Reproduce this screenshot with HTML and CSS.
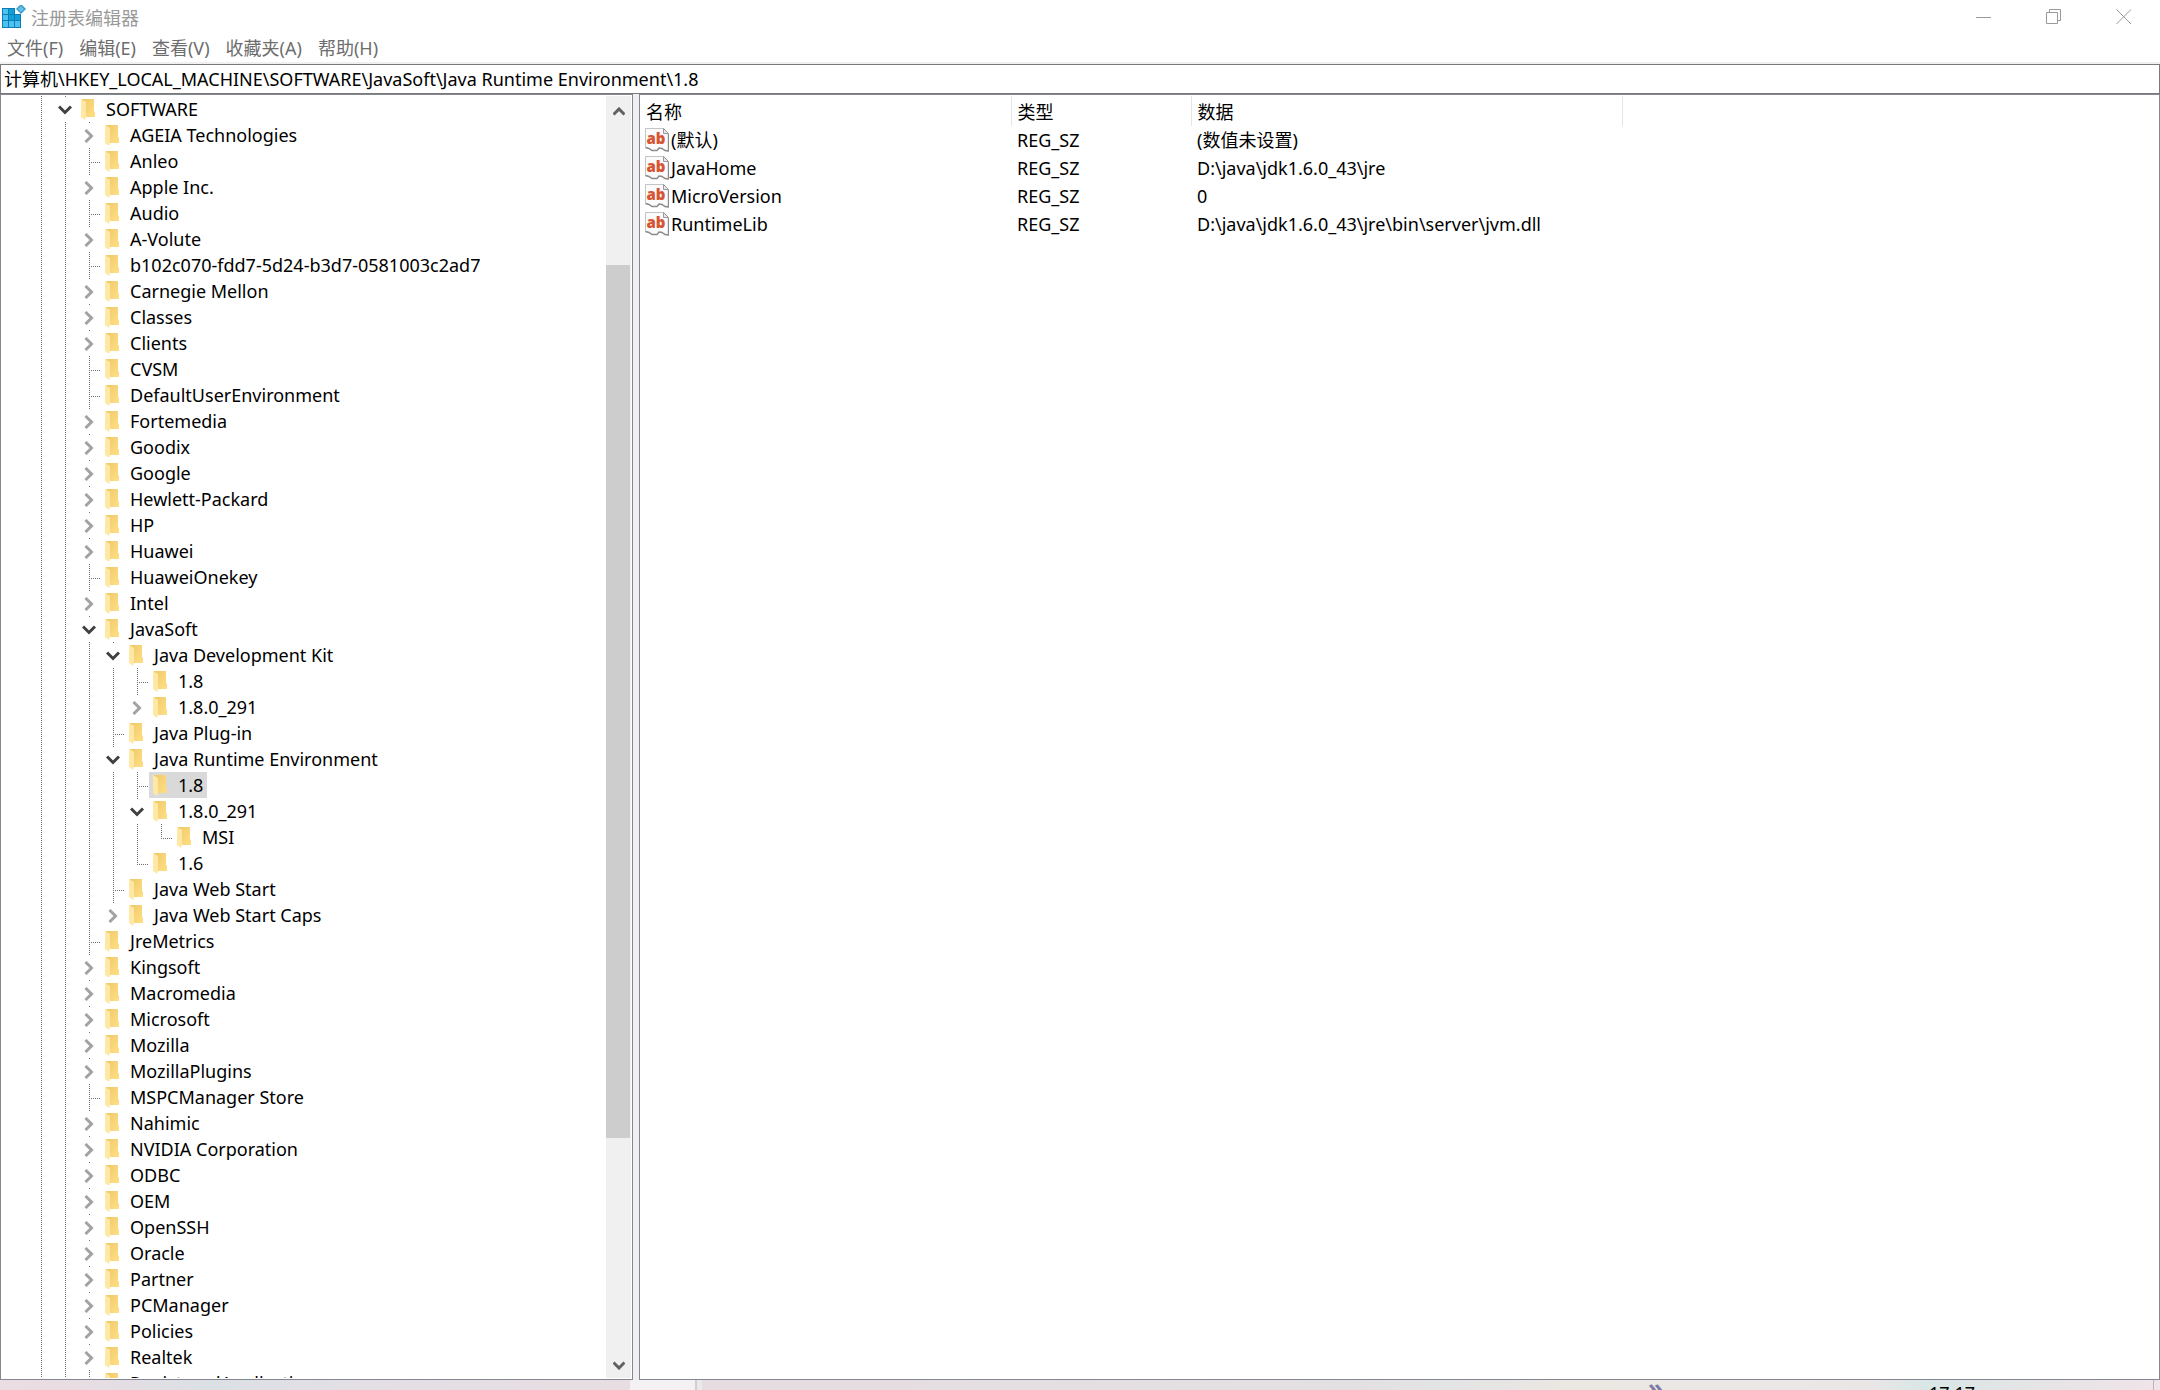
FILE: index.html
```html
<!DOCTYPE html>
<html lang="zh-CN">
<head>
  <meta charset="UTF-8">
  <title>注册表编辑器</title>
  <link rel="stylesheet" href="styles.css">
</head>
<body>

  <!-- Shared icons -->
  <svg class="icon-defs" aria-hidden="true">
    <defs>
      <linearGradient id="folderFront" x1="0" y1="0" x2="1" y2="1">
        <stop offset="0" stop-color="#efc968"/>
        <stop offset="1" stop-color="#ffdf85"/>
      </linearGradient>
    </defs>
    <symbol id="folder" viewBox="0 0 14 21">
      <path d="M1 0H13V12L14 13V18H4Z" fill="url(#folderFront)"/>
      <path d="M0 0L5 3V18L4 21L0 18Z" fill="#ffe8a6"/>
    </symbol>
    <symbol id="closed" viewBox="0 0 10 14">
      <path d="M1.5 1L7.5 7L1.5 13" fill="none" stroke="#a2a2a2" stroke-width="3"/>
    </symbol>
    <symbol id="open" viewBox="0 0 14 10">
      <path d="M1 1.5L7 7.5L13 1.5" fill="none" stroke="#404040" stroke-width="3"/>
    </symbol>
    <symbol id="string" viewBox="0 0 24 24">
      <path d="M0.5 0.5H18.5L23.5 5.5V23L20 22.5L17 20.5L14 20L12 22.5H7L4 20.5L0.5 19.5Z" fill="#fbfbfb" stroke="#c4c4c4"/>
      <path d="M18.5 0.5V5.5H23.5Z" fill="#e8e8e8" stroke="#9a9a9a"/>
      <path d="M0.5 19.5L4 20.5L7 22.5H12L14 20L17 20.5L20 22.5L23.5 23V6" fill="none" stroke="#8c8c8c" stroke-width="1.4"/>
      <text x="11" y="16" text-anchor="middle" class="string-label">ab</text>
    </symbol>
  </svg>

  <div class="window">
    <header class="titlebar">
      <svg class="app-icon" viewBox="0 0 24 24">
        <path d="M0 3H13V9H19V23H0Z" fill="#0b7fb5"/>
        <path d="M1 4h5v5H1zM1 10h5v5H1zM1 16h5v6H1zM7 16h5v6H7zM13 16h5v6h-5z" fill="#4cc2f1"/>
        <path d="M7 4h5v5H7zM7 10h5v5H7zM13 10h5v5h-5z" fill="#109fd8"/>
        <path d="M19 0L23 4L19 8L15 4Z" fill="#63c3ea" stroke="#3f9cc9" stroke-width="1.5"/>
      </svg>
      <h1 class="title">注册表编辑器</h1>
      <div class="window-buttons">
        <button aria-label="最小化"><svg viewBox="0 0 16 16"><path d="M0 8.5H15"/></svg></button>
        <button aria-label="还原"><svg viewBox="0 0 16 16"><path d="M0.5 3.5H11.5V14.5H0.5ZM3.5 3V0.5H14.5V11.5H12"/></svg></button>
        <button aria-label="关闭"><svg viewBox="0 0 16 16"><path d="M0.5 0.5L15 15M15 0.5L0.5 15"/></svg></button>
      </div>
    </header>

    <nav class="menubar">
      <button>文件(F)</button>
      <button>编辑(E)</button>
      <button>查看(V)</button>
      <button>收藏夹(A)</button>
      <button>帮助(H)</button>
    </nav>

    <input class="address" type="text" aria-label="地址" value="计算机\HKEY_LOCAL_MACHINE\SOFTWARE\JavaSoft\Java Runtime Environment\1.8">

    <main class="panes">
      <section class="tree-pane">
        <div class="tree" id="tree"></div>
        <div class="scrollbar">
          <button aria-label="向上"><svg viewBox="0 0 12 9"><path d="M0.5 7.5L6 2L11.5 7.5"/></svg></button>
          <div class="track"><div class="thumb"></div></div>
          <button aria-label="向下"><svg viewBox="0 0 12 9"><path d="M0.5 1.5L6 7L11.5 1.5"/></svg></button>
        </div>
      </section>

      <section class="value-pane">
        <table class="values">
          <colgroup>
            <col class="col-name">
            <col class="col-type">
            <col class="col-data">
          </colgroup>
          <thead>
            <tr><th>名称</th><th>类型</th><th>数据</th></tr>
          </thead>
          <tbody id="values"></tbody>
        </table>
      </section>
    </main>

    <footer class="taskbar">
      <div class="task-left"></div>
      <div class="task-active"></div>
      <div class="task-right">
        <span class="more">»</span>
        <span class="clock">17:17</span>
        <span class="desktop-edge"></span>
      </div>
    </footer>
  </div>

  <script>
    // [depth, name, state]  state: "+" closed, "-" open, "" no subkeys
    const keys = [
      [0, "SOFTWARE", "-"],
      [1, "AGEIA Technologies", "+"],
      [1, "Anleo", ""],
      [1, "Apple Inc.", "+"],
      [1, "Audio", ""],
      [1, "A-Volute", "+"],
      [1, "b102c070-fdd7-5d24-b3d7-0581003c2ad7", ""],
      [1, "Carnegie Mellon", "+"],
      [1, "Classes", "+"],
      [1, "Clients", "+"],
      [1, "CVSM", ""],
      [1, "DefaultUserEnvironment", ""],
      [1, "Fortemedia", "+"],
      [1, "Goodix", "+"],
      [1, "Google", "+"],
      [1, "Hewlett-Packard", "+"],
      [1, "HP", "+"],
      [1, "Huawei", "+"],
      [1, "HuaweiOnekey", ""],
      [1, "Intel", "+"],
      [1, "JavaSoft", "-"],
      [2, "Java Development Kit", "-"],
      [3, "1.8", ""],
      [3, "1.8.0_291", "+"],
      [2, "Java Plug-in", ""],
      [2, "Java Runtime Environment", "-"],
      [3, "1.8", "", "selected"],
      [3, "1.8.0_291", "-"],
      [4, "MSI", ""],
      [3, "1.6", ""],
      [2, "Java Web Start", ""],
      [2, "Java Web Start Caps", "+"],
      [1, "JreMetrics", ""],
      [1, "Kingsoft", "+"],
      [1, "Macromedia", "+"],
      [1, "Microsoft", "+"],
      [1, "Mozilla", "+"],
      [1, "MozillaPlugins", "+"],
      [1, "MSPCManager Store", ""],
      [1, "Nahimic", "+"],
      [1, "NVIDIA Corporation", "+"],
      [1, "ODBC", "+"],
      [1, "OEM", "+"],
      [1, "OpenSSH", "+"],
      [1, "Oracle", "+"],
      [1, "Partner", "+"],
      [1, "PCManager", "+"],
      [1, "Policies", "+"],
      [1, "Realtek", "+"],
      [1, "RegisteredApplications", ""]
    ];

    const values = [
      ["(默认)", "REG_SZ", "(数值未设置)"],
      ["JavaHome", "REG_SZ", "D:\\java\\jdk1.6.0_43\\jre"],
      ["MicroVersion", "REG_SZ", "0"],
      ["RuntimeLib", "REG_SZ", "D:\\java\\jdk1.6.0_43\\jre\\bin\\server\\jvm.dll"]
    ];

    // true when another key follows at this depth under the same parent
    function hasNext(index, depth) {
      if (depth < 2) return true;
      for (let i = index + 1; i < keys.length; i++) {
        if (keys[i][0] < depth) return false;
        if (keys[i][0] === depth) return true;
      }
      return false;
    }

    function drawTree() {
      document.getElementById('tree').innerHTML = keys.map(([depth, name, state, selected], index) => {
        let cells = '<span class="guide line"></span>';
        for (let d = 0; d < depth; d++) {
          cells += `<span class="guide ${hasNext(index, d) ? 'line' : ''}"></span>`;
        }
        if (state) {
          const icon = state === '-' ? 'open' : 'closed';
          cells += `<button class="guide toggle ${icon}" aria-label="${name}"><svg><use href="#${icon}"/></svg></button>`;
        } else {
          cells += `<span class="guide branch ${hasNext(index, depth) ? 'line' : 'last'}"></span>`;
        }
        return `<div class="row">${cells}<a href="#" class="key ${selected || ''}"><svg class="folder"><use href="#folder"/></svg>${name}</a></div>`;
      }).join('');
    }

    function drawValues() {
      document.getElementById('values').innerHTML = values.map(([name, type, data]) => `
        <tr>
          <td class="name"><svg class="string-icon"><use href="#string"/></svg>${name}</td>
          <td>${type}</td>
          <td>${data}</td>
        </tr>`).join('');
    }

    drawTree();
    drawValues();
  </script>
</body>
</html>
```
FILE: styles.css
```css
* {
  box-sizing: border-box;
}

body {
  margin: 0;
  font-family: "Noto Sans", "Noto Sans CJK SC", sans-serif;
  font-size: 18px;
  color: #000;
  background: #fff;
}

button {
  padding: 0;
  border: none;
  background: none;
  font: inherit;
  color: inherit;
}

.icon-defs {
  position: absolute;
  width: 0;
  height: 0;
}

.window {
  height: 100vh;
  display: flex;
  flex-direction: column;
  overflow: hidden;
}

/* Title bar and menu */
.titlebar {
  flex: none;
  height: 34px;
  display: flex;
  align-items: center;
  padding: 0 1px 0 2px;
  color: #999;
}

.app-icon {
  width: 24px;
  height: 24px;
}

.title {
  flex: 1;
  margin: 0 0 0 5px;
  font-size: 18px;
  font-weight: normal;
}

.window-buttons {
  display: flex;
}

.window-buttons button {
  width: 70px;
  height: 34px;
  display: flex;
  align-items: center;
  justify-content: center;
}

.window-buttons svg {
  width: 16px;
  height: 16px;
  fill: none;
  stroke: #999;
}

.menubar {
  flex: none;
  height: 30px;
  display: flex;
  align-items: center;
  gap: 16px;
  padding: 0 0 2px 7px;
  border-bottom: 2px solid #f0f0f0;
  color: #6d6d6d;
}

/* Address box */
.address {
  flex: none;
  width: 100%;
  height: 30px;
  padding: 0 3px 2px;
  border: 1px solid #7a7a7a;
  font: inherit;
  color: inherit;
  background: #fff;
}

/* Panes */
.panes {
  flex: 1;
  min-height: 0;
  display: flex;
  gap: 6px;
  background: #f0f0f0;
}

.tree-pane,
.value-pane {
  border: 1px solid #828790;
  background: #fff;
  overflow: hidden;
}

.tree-pane {
  flex: none;
  width: 633px;
  display: flex;
  padding: 1px;
}

.value-pane {
  flex: 1;
  padding-top: 1px;
}

/* Key tree */
.tree {
  flex: 1;
  padding-left: 27px;
  overflow: hidden;
}

.row {
  height: 26px;
  display: flex;
}

.guide {
  flex: none;
  width: 24px;
  height: 26px;
}

.line {
  background: repeating-linear-gradient(#6e6e6e 0 1px, transparent 1px 2px) 12px 0 / 1px 26px no-repeat;
}

.branch.line {
  background:
    repeating-linear-gradient(#6e6e6e 0 1px, transparent 1px 2px) 12px 0 / 1px 26px no-repeat,
    repeating-linear-gradient(90deg, #6e6e6e 0 1px, transparent 1px 2px) 12px 14px / 11px 1px no-repeat;
}

.branch.last {
  background:
    repeating-linear-gradient(#6e6e6e 0 1px, transparent 1px 2px) 12px 0 / 1px 14px no-repeat,
    repeating-linear-gradient(90deg, #6e6e6e 0 1px, transparent 1px 2px) 12px 14px / 11px 1px no-repeat;
}

.toggle {
  display: flex;
  align-items: center;
  justify-content: center;
  padding: 2px 1px 0 0;
  background: linear-gradient(#6e6e6e, #6e6e6e) 12px 0 / 1px 1px no-repeat;
}

.toggle.closed svg {
  width: 10px;
  height: 14px;
}

.toggle.open svg {
  width: 14px;
  height: 10px;
}

.key {
  display: flex;
  align-items: center;
  padding: 0 4px;
  color: #000;
  line-height: 26px;
  white-space: nowrap;
  text-decoration: none;
}

.key.selected {
  background: #d9d9d9;
}

.folder {
  width: 14px;
  height: 21px;
  margin-right: 11px;
}

/* Scrollbar */
.scrollbar {
  flex: none;
  width: 25px;
  display: flex;
  flex-direction: column;
  background: #f0f0f0;
}

.scrollbar button {
  height: 28px;
  padding-bottom: 2px;
}

.scrollbar svg {
  width: 12px;
  height: 9px;
  fill: none;
  stroke: #606060;
  stroke-width: 3;
}

.track {
  flex: 1;
  padding-top: 141px;
}

.thumb {
  width: 24px;
  height: 80.5%;
  background: #cdcdcd;
}

/* Value list */
.values {
  table-layout: fixed;
  width: 983px;
  border-collapse: collapse;
}

.col-name {
  width: 371px;
}

.col-type {
  width: 180px;
}

.values th {
  height: 30px;
  padding: 0 0 0 6px;
  border-right: 1px solid #e5e5e5;
  font-weight: normal;
  text-align: left;
}

.values td {
  height: 28px;
  padding: 0 0 0 6px;
  line-height: 28px;
}

.values .name {
  display: flex;
  align-items: center;
  gap: 2px;
  padding-left: 5px;
}

.string-icon {
  width: 24px;
  height: 24px;
}

.string-label {
  font-family: "Open Sans", sans-serif;
  font-size: 15px;
  font-weight: 800;
  fill: #d65532;
}

/* Top edge of the taskbar */
.taskbar {
  flex: none;
  height: 10px;
  display: flex;
  overflow: hidden;
}

.task-left {
  width: 630px;
  background: linear-gradient(90deg, #eadde3, #e8dde3 12%, #dbe0e5 33%, #e4dfe5 60%, #e7dde2);
}

.task-active {
  width: 72px;
  border-right: 5px solid #ebe8ea;
  background: linear-gradient(90deg, #f3f1f3 65px, #d2cdd1 65px);
}

.task-right {
  flex: 1;
  display: flex;
  background: linear-gradient(90deg, #e6dce1, #e3e0e3 45%, #e3e4e5 51%, #ebe7e2 59%, #ebe7e6 75%, #eae6e6 80%, #d9e6e6 84%, #e8e4e6 93%, #f0e4e8);
}

.more {
  margin-left: 946px;
  font-size: 24px;
  font-weight: bold;
  line-height: 14px;
  color: #7d7ba6;
}

.clock {
  margin-left: auto;
  margin-right: 178px;
  line-height: 26px;
}

.desktop-edge {
  width: 7px;
  border-left: 1px solid #b9b4b8;
}
```
